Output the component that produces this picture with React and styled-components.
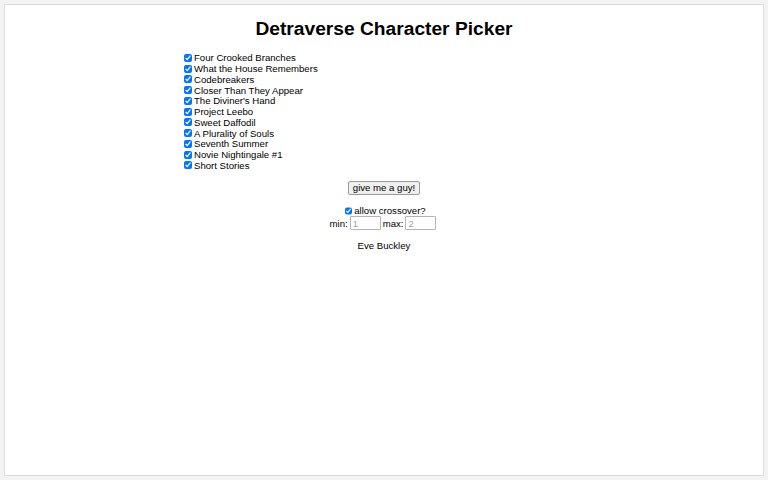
import React from 'react';
import styled, { createGlobalStyle } from 'styled-components';

const Global = createGlobalStyle`
  html, body { margin: 0; padding: 0; background: #f3f3f3; }
  body { font-family: "Liberation Sans", Arial, sans-serif; color: #000; }
`;

const Frame = styled.div`
  margin: 4px 4px 0 4px;
  box-sizing: border-box;
  height: 472px;
  background: #fff;
  border: 1px solid #dcdcdc;
  font-size: 9.6px;
  display: flex;
  flex-direction: column;
  align-items: center;
`;

const Title = styled.h1`
  font-size: 19.2px;
  font-weight: bold;
  line-height: 22px;
  margin: 13px 0 12.5px;
  text-align: center;
`;

const List = styled.div`
  width: 404px;
  display: flex;
  flex-direction: column;
`;

const Row = styled.label`
  display: flex;
  align-items: center;
  height: 10.75px;
  white-space: nowrap;
`;

const Check = styled.input.attrs({ type: 'checkbox' })`
  width: 7.8px;
  height: 7.8px;
  margin: 0 1.8px 0 2.4px;
  flex: none;
`;

const Button = styled.button`
  margin-top: 10px;
  font: inherit;
  font-size: 9.6px;
  height: 14px;
  padding: 0 3.6px;
  border: 1px solid #9a9a9a;
  border-radius: 2px;
  background: #efefef;
  color: #000;
  line-height: 1;
`;

const Options = styled.div`
  margin-top: 10.5px;
  display: flex;
  flex-direction: column;
  align-items: center;
`;

const Line = styled.label`
  display: flex;
  align-items: center;
  height: ${p => p.$h}px;
  white-space: nowrap;
`;

const NumInput = styled.input`
  box-sizing: border-box;
  width: 31px;
  height: 14px;
  margin: 0 2px;
  padding: 0 2px;
  border: 1px solid #b4b4b4;
  border-radius: 1px;
  font: inherit;
  font-size: 9.6px;
  &::placeholder { color: #a0a0a0; }
`;

const Result = styled.p`
  margin: 9.5px 0 0;
  line-height: 11px;
`;

const books = [
  'Four Crooked Branches',
  'What the House Remembers',
  'Codebreakers',
  'Closer Than They Appear',
  "The Diviner's Hand",
  'Project Leebo',
  'Sweet Daffodil',
  'A Plurality of Souls',
  'Seventh Summer',
  'Novie Nightingale #1',
  'Short Stories',
];

export default function App() {
  return (
    <>
      <Global />
      <Frame>
        <Title>Detraverse Character Picker</Title>
        <List>
          {books.map(b => (
            <Row key={b}>
              <Check defaultChecked />
              {b}
            </Row>
          ))}
        </List>
        <Button>give me a guy!</Button>
        <Options>
          <Line $h={11}>
            <Check defaultChecked />
            allow crossover?
          </Line>
          <Line $h={14}>
            min:<NumInput placeholder="1" />max:<NumInput placeholder="2" />
          </Line>
        </Options>
        <Result>Eve Buckley</Result>
      </Frame>
    </>
  );
}
